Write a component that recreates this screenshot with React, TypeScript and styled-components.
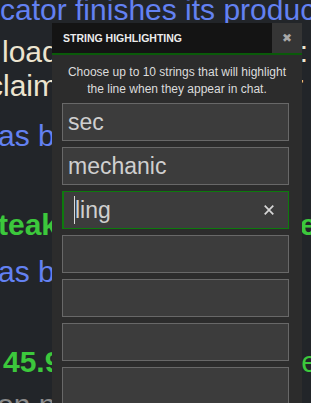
import React from 'react'
import styled, { createGlobalStyle } from 'styled-components'

const GlobalStyle = createGlobalStyle`
    html, body {
        margin: 0;
        padding: 0;
        background: #222529;
        overflow: hidden;
    }
`;

const strings = ['sec', 'mechanic', 'ling', '', '', '', '', '', '', ''];

const App = () => {
    return (
        <Page>
            <GlobalStyle />
            <Chat>
                <Line color="#6381f2" top={-7} shift={0}>
                    <span>cator finishes its production</span>
                </Line>
                <Line color="#ece4cf" top={8} shift={2}>
                    <span>loading the batch</span>
                    <Tail off={3}>:</Tail>
                </Line>
                <Line color="#ece4cf" top={0} shift={-12}>
                    <span>claimed by the indicator</span>
                </Line>
                <Line color="#6381f2" top={16} shift={-2}>
                    <span>as been set</span>
                </Line>
                <Line color="#3cc83c" bold top={55} shift={-2}>
                    <span>teak timer</span>
                    <Tail off={-17}>er</Tail>
                </Line>
                <Line color="#6381f2" top={13} shift={-2}>
                    <span>as been set</span>
                </Line>
                <Line color="#3cc83c" bold top={56} shift={3}>
                    <span>45.9 seconds</span>
                    <Tail off={-7} light>e</Tail>
                </Line>
                <Line color="#8a8a8a" top={9} shift={-3}>
                    <span>on n</span>
                </Line>
            </Chat>

            <Dialog>
                <Header>
                    <Title>String Highlighting</Title>
                    <Close>✖</Close>
                </Header>
                <Body>
                    <Intro>
                        Choose up to 10 strings that will highlight
                        <br />
                        the line when they appear in chat.
                    </Intro>
                    <Fields>
                        {strings.map((s, i) => (
                            <Field key={i} focused={i === 2}>
                                {i === 2 && <Caret />}
                                <FieldText>{s}</FieldText>
                                {i === 2 && (
                                    <Clear viewBox="0 0 14 14">
                                        <path d="M2 2 L12 12 M12 2 L2 12" />
                                    </Clear>
                                )}
                            </Field>
                        ))}
                    </Fields>
                </Body>
            </Dialog>
        </Page>
    )
}
export default App;

const Page = styled.div`
    position: relative;
    width: 311px;
    height: 403px;
    overflow: hidden;
    background: #222529;
`;

const Chat = styled.div`
    display: flex;
    flex-direction: column;
    font-family: 'Liberation Sans', Arial, sans-serif;
    font-size: 30px;
`;

interface LineProps {
    color: string;
    bold?: boolean;
    top: number;
    shift: number;
}
const Line = styled.div<LineProps>`
    display: flex;
    justify-content: space-between;
    height: 34px;
    line-height: 34px;
    white-space: nowrap;
    overflow: hidden;
    flex-shrink: 0;
    margin-top: ${({ top }) => top}px;
    padding-left: ${({ shift }) => Math.max(shift, 0)}px;
    color: ${({ color }) => color};
    font-weight: ${({ bold }) => (bold ? 700 : 400)};

    & > span:first-child {
        margin-left: ${({ shift }) => Math.min(shift, 0)}px;
    }
`;

interface TailProps {
    off: number;
    light?: boolean;
}
const Tail = styled.span<TailProps>`
    flex-shrink: 0;
    margin-right: ${({ off }) => off}px;
    font-weight: ${({ light }) => (light ? 400 : 'inherit')};
`;

const Dialog = styled.div`
    position: absolute;
    left: 52px;
    top: 23px;
    width: 250px;
    height: 400px;
    background: #2c2c2c;
    font-family: 'Liberation Sans', Arial, sans-serif;
`;

const Header = styled.div`
    display: flex;
    align-items: stretch;
    height: 30px;
    background: #141414;
    border-bottom: 2px solid #0a5a0a;
`;

const Title = styled.div`
    flex: 1;
    display: flex;
    align-items: center;
    padding-left: 11px;
    font-size: 10.5px;
    font-weight: 700;
    text-transform: uppercase;
    color: #ececec;
`;

const Close = styled.div`
    width: 30px;
    display: flex;
    align-items: center;
    justify-content: center;
    background: #353535;
    color: #a8a8a8;
    font-size: 12px;
    font-family: 'DejaVu Sans', sans-serif;
`;

const Body = styled.div`
    padding: 9px 13px 0 10px;
`;

const Intro = styled.p`
    margin: 0 0 5px 3px;
    text-align: center;
    font-size: 12px;
    line-height: 17px;
    color: #dcdcdc;
    white-space: nowrap;
`;

const Fields = styled.div`
    display: flex;
    flex-direction: column;
    gap: 6px;
`;

interface FieldProps {
    focused?: boolean;
}
const Field = styled.div<FieldProps>`
    box-sizing: border-box;
    height: 38px;
    display: flex;
    align-items: center;
    padding-left: ${({ focused }) => (focused ? 10 : 5)}px;
    background: #3c3c3c;
    border: 1px solid ${({ focused }) => (focused ? '#0d7a0d' : '#686868')};
    border-left-width: ${({ focused }) => (focused ? 2 : 1)}px;
`;

const Caret = styled.span`
    width: 1px;
    height: 28px;
    background: #d8d8d8;
`;

const FieldText = styled.span`
    flex: 1;
    font-size: 23px;
    color: #cfcfcf;
`;

const Clear = styled.svg`
    width: 12px;
    height: 12px;
    margin-right: 13px;
    stroke: #d6d6d6;
    stroke-width: 2;
    fill: none;
`;
